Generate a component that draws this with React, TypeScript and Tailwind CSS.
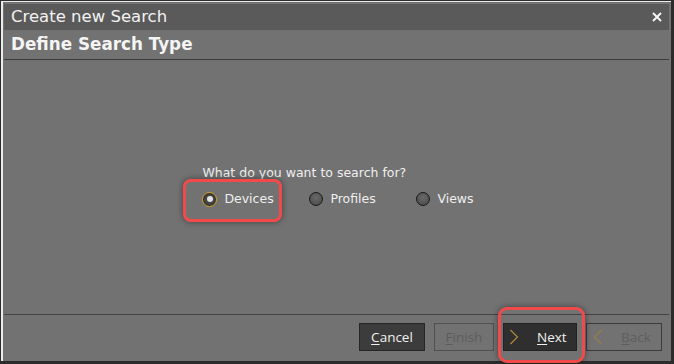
import React from "react";

function Radio({ checked, label }: { checked?: boolean; label: string }) {
  return (
    <div className="flex items-center gap-[7px]">
      {checked ? (
        <div className="w-[15px] h-[15px] rounded-full border border-[#d6a72a] bg-[#2e2e2e] flex items-center justify-center">
          <div className="w-[11px] h-[11px] rounded-full bg-[#444] flex items-center justify-center">
            <div className="w-[6px] h-[6px] rounded-full bg-[#e2e2e2]" />
          </div>
        </div>
      ) : (
        <div className="w-[14px] h-[14px] rounded-full border border-[#1a1a1a] bg-[radial-gradient(circle_at_50%_40%,#6a6a6a,#464646)]" />
      )}
      <span className="text-[12.5px] text-[#efefef]">{label}</span>
    </div>
  );
}

function Chevron() {
  return (
    <svg width="10" height="16" viewBox="0 0 10 16">
      <path d="M1.5 1 L8.5 8 L1.5 15" fill="none" stroke="#b08a3a" strokeWidth="1.2" />
    </svg>
  );
}

function ChevronLeft() {
  return (
    <svg width="10" height="16" viewBox="0 0 10 16" className="opacity-70">
      <path d="M8.5 1 L1.5 8 L8.5 15" fill="none" stroke="#a8843a" strokeWidth="1.2" />
    </svg>
  );
}

export default function App() {
  return (
    <div
      className="relative w-[674px] h-[364px] bg-[#2c2c2c] pt-[1px] pl-[1px]"
      style={{ fontFamily: '"DejaVu Sans", Verdana, sans-serif' }}
    >
      <div className="w-[670px] h-[360px] border-t border-l-2 border-[#ececec] bg-[#727272] p-[2px] pl-[1px] flex flex-col">
        {/* title bar */}
        <div className="h-[26px] bg-[#5a5a5a] flex items-center justify-between pl-[7px] pr-[7px]">
          <span className="text-[16.5px] text-[#f2f2f2] leading-none">Create new Search</span>
          <svg width="10" height="10" viewBox="0 0 10 10">
            <path d="M1 1 L9 9 M9 1 L1 9" stroke="#f4f4f4" strokeWidth="2" />
          </svg>
        </div>

        {/* header */}
        <div className="h-[29px] flex items-center pl-[7px]">
          <span className="text-[16.8px] font-bold text-[#f4f4f4] leading-none">Define Search Type</span>
        </div>
        <div className="h-px bg-[#3b3b3b]" />

        {/* body */}
        <div className="flex-1 flex items-center justify-center pt-[2px]">
          <div className="flex flex-col items-start gap-[10px] ml-[3px]">
            <span className="text-[12.5px] text-[#efefef] leading-none">
              What do you want to search for?
            </span>
            <div className="flex items-center">
              <div className="w-[107px]">
                <Radio checked label="Devices" />
              </div>
              <div className="w-[107px]">
                <Radio label="Profiles" />
              </div>
              <Radio label="Views" />
            </div>
          </div>
        </div>

        <div className="h-px bg-[#444]" />

        {/* footer */}
        <div
          className="h-[44px] flex items-start justify-end pt-[8px] pr-[7px] text-[13.5px]"
          style={{ fontFamily: '"Open Sans", "DejaVu Sans", sans-serif' }}
        >
          <button className="w-[66px] h-[28px] bg-[#3c3c3c] border border-[#262626] text-[#f0f0f0] flex items-center justify-center">
            <span>
              <span className="underline underline-offset-2">C</span>ancel
            </span>
          </button>
          <button className="ml-[9px] w-[60px] h-[28px] border border-[#505050] text-[#5c5c5c] flex items-center justify-center">
            <span>
              <span className="underline underline-offset-2">F</span>inish
            </span>
          </button>
          <button className="ml-[9px] w-[74px] h-[28px] bg-[#2f2f2f] border border-[#222] text-[#f0f0f0] flex items-center pl-[5px]">
            <Chevron />
            <span className="ml-[18px]">
              <span className="underline underline-offset-2">N</span>ext
            </span>
          </button>
          <button className="ml-[9px] w-[76px] h-[28px] border border-[#3c3c3c] text-[#5e5e5e] flex items-center pl-[6px]">
            <ChevronLeft />
            <span className="ml-[18px]">
              <span className="underline underline-offset-2">B</span>ack
            </span>
          </button>
        </div>
      </div>

      {/* highlight overlays */}
      <div className="absolute left-[183px] top-[179px] w-[99px] h-[43px] rounded-[8px] border-[3.5px] border-[#f24a4a] shadow-[0_0_6px_rgba(0,0,0,0.45)]" />
      <div className="absolute left-[498px] top-[307px] w-[87px] h-[56px] rounded-[9px] border-[3.5px] border-[#f24a4a] shadow-[0_0_6px_rgba(0,0,0,0.45)]" />
    </div>
  );
}
